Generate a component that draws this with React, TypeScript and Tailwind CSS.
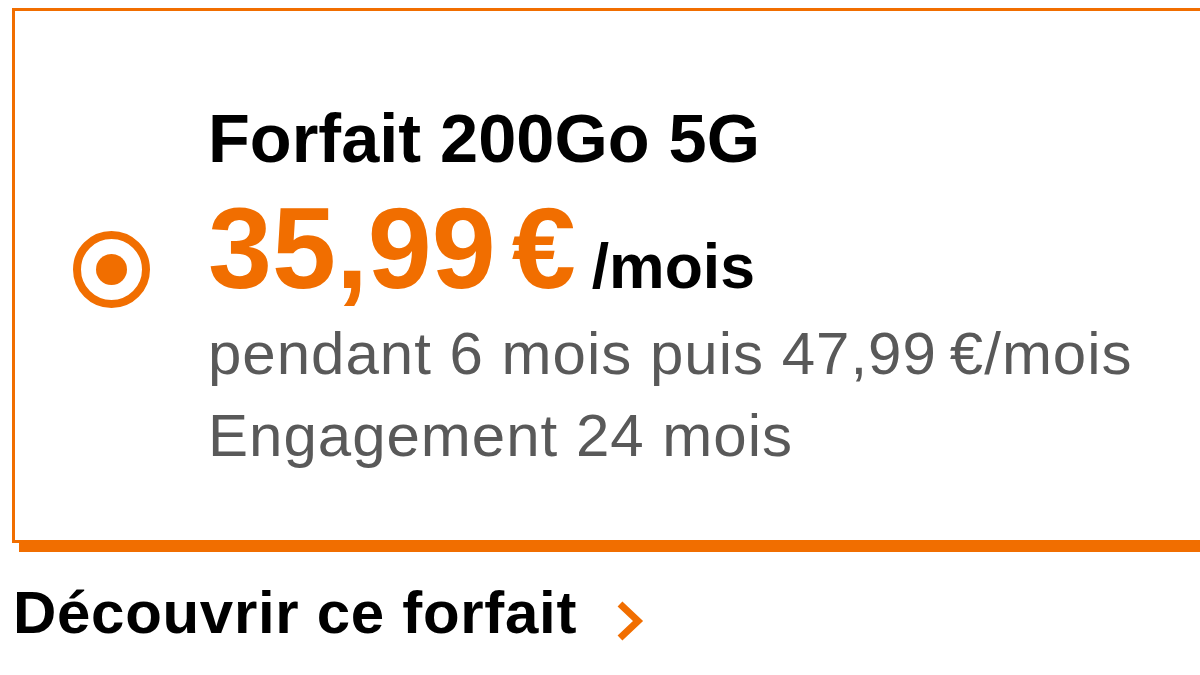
import React from "react";

export default function App() {
  return (
    <div
      className="w-[1200px] h-[675px] overflow-hidden bg-white"
      style={{ fontFamily: '"Liberation Sans", Arial, sans-serif' }}
    >
      <div className="ml-[12px] mt-[8px] w-[1200px] h-[535px] border-[3px] border-[#f16e00] shadow-[7px_9px_0_#f16e00] flex items-start">
        <div className="ml-[58px] mt-[220px] w-[77px] h-[77px] rounded-full border-[8px] border-[#f16e00] flex items-center justify-center shrink-0">
          <div className="w-[31px] h-[31px] rounded-full bg-[#f16e00]" />
        </div>
        <div className="ml-[58px] mt-[94px] flex flex-col">
          <div className="text-[68.5px] leading-[67px] font-bold text-black">
            Forfait 200Go 5G
          </div>
          <div className="mt-[19px] flex items-baseline">
            <span className="text-[115px] leading-[115px] font-bold text-[#f16e00]">
              35,99<span className="ml-[16px]">€</span>
            </span>
            <span className="ml-[16px] text-[62.5px] leading-[61px] font-bold text-black">
              /mois
            </span>
          </div>
          <div className="mt-[7px] text-[60px] leading-[82px] text-[#595959] tracking-[1px]">
            <div>pendant 6 mois puis 47,99{"\u2009"}€/mois</div>
            <div>Engagement 24 mois</div>
          </div>
        </div>
      </div>
      <div className="mt-[40px] ml-[13px] flex items-center">
        <span className="text-[60px] leading-[60px] font-bold text-black tracking-[0.7px]">
          Découvrir ce forfait
        </span>
        <svg
          className="ml-[39px] mt-[13px]"
          width="30"
          height="44"
          viewBox="0 0 30 44"
        >
          <polyline
            points="4,6 22,23 4,40"
            fill="none"
            stroke="#f16e00"
            strokeWidth="7"
            strokeLinejoin="miter"
          />
        </svg>
      </div>
    </div>
  );
}
